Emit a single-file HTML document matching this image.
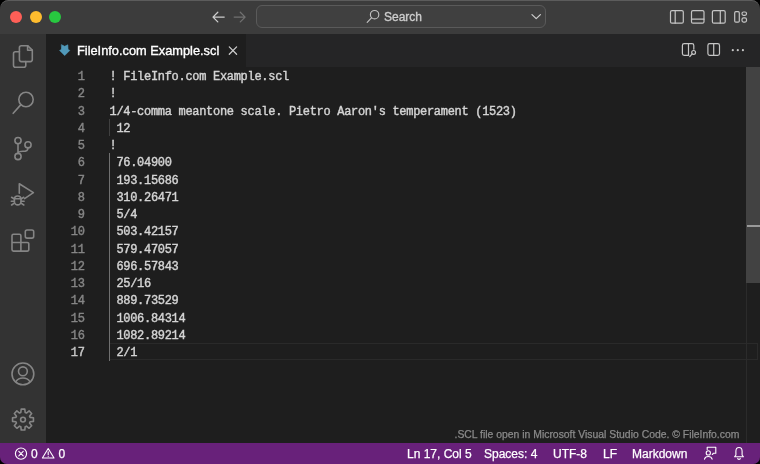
<!DOCTYPE html>
<html><head><meta charset="utf-8">
<style>
*{margin:0;padding:0;box-sizing:border-box}
html,body{width:760px;height:464px;overflow:hidden;background:#000}
body{font-family:"Liberation Sans",sans-serif;position:relative;-webkit-text-stroke:0.25px currentColor}
#win{will-change:transform;position:absolute;left:0;top:0;width:760px;height:464px;border-radius:8.5px 8.5px 7px 7px;overflow:hidden;background:#1e1e1e}
#rim{position:absolute;left:0;top:0;width:760px;height:464px;border-radius:8.5px 8.5px 7px 7px;border-top:1px solid #5c5c5c;pointer-events:none}
.abs{position:absolute}
#title{left:0;top:0;width:760px;height:34px;background:#3c3c3c}
.tl{position:absolute;top:11px;width:12px;height:12px;border-radius:50%}
#search{left:256px;top:5px;width:290px;height:23px;border:1px solid #5a5a5a;border-radius:6px;background:#404040}
#act{left:0;top:34px;width:46px;height:409px;background:#333333}
#tabs{left:46px;top:34px;width:714px;height:33px;background:#252526}
#tab{left:46px;top:34px;width:200px;height:33px;background:#1e1e1e}
#editor{left:46px;top:67px;width:714px;height:376px;background:#1e1e1e}
.code{position:absolute;left:0;top:69.1px;width:760px;font-family:"Liberation Mono",monospace;font-size:12px;letter-spacing:-0.3px;line-height:17.26px;color:#d4d4d4;white-space:pre;-webkit-text-stroke:0.4px currentColor}
.ln{position:absolute;left:46px;width:38.6px;text-align:right;color:#858585}
.ln.cur{color:#c6c6c6}
.tx{position:absolute;left:109.5px}
#status{left:0;top:443px;width:760px;height:21px;background:#68217a;color:#fff;font-size:12px}
.st{position:absolute;top:3.5px;line-height:14px;white-space:nowrap}
svg{position:absolute;overflow:visible}
</style></head><body>
<div id="win">
  <div id="title" class="abs">
    <div class="tl" style="left:10px;background:#fe5f57"></div>
    <div class="tl" style="left:29.5px;background:#febc2e"></div>
    <div class="tl" style="left:49px;background:#28c840"></div>
  </div>
  <div id="search" class="abs"></div>
  <div class="abs" style="left:384px;top:10px;font-size:12px;line-height:14px;color:#cccccc;-webkit-text-stroke:0.35px #ccc">Search</div>
  <svg width="760" height="464" style="left:0;top:0" fill="none" stroke-linecap="round" stroke-linejoin="round">
    <!-- back/forward -->
    <g stroke="#cccccc" stroke-width="1.3"><path d="M213 17.1H224.2M217.8 12.3L213 17.1L217.8 21.9"/></g>
    <g stroke="#707070" stroke-width="1.3"><path d="M234.2 17.1H245.1M240.3 12.3L245.1 17.1L240.3 21.9"/></g>
    <!-- search magnifier -->
    <g stroke="#c0c0c0" stroke-width="1.15"><circle cx="374.6" cy="14.7" r="4.2"/><path d="M371.7 17.7L367.2 22.4"/></g>
    <!-- chevron -->
    <g stroke="#cccccc" stroke-width="1.3"><path d="M532 14.6L536.2 18.6L540.4 14.6"/></g>
    <!-- layout icons -->
    <g stroke="#c5c5c5" stroke-width="1.2">
      <rect x="670.5" y="10.6" width="12.8" height="12.6" rx="1.5"/><path d="M675.2 10.6V23.2"/>
      <rect x="691.5" y="10.6" width="12.5" height="12.6" rx="1.5"/><path d="M691.5 19.2H704"/>
      <rect x="712.4" y="10.6" width="12.8" height="12.6" rx="1.5"/><path d="M720.3 10.6V23.2"/>
      <rect x="734.7" y="11.7" width="4.6" height="10.4" rx="1.2"/><rect x="742" y="12" width="4.5" height="3.3" rx="1.5"/><rect x="742" y="17.9" width="4.5" height="4.2" rx="1.5"/>
    </g>
  </svg>
  <div id="act" class="abs"></div>
  <div id="tabs" class="abs"></div>
  <div id="tab" class="abs"></div>
  <div id="editor" class="abs"></div>

  <!-- current line box -->
  <div class="abs" style="left:110px;top:343.4px;width:648px;height:16.6px;border:1px solid #2a2a2a;border-left:none"></div>
  <!-- indent guides -->
  <div class="abs" style="left:109px;top:118.9px;width:1px;height:17px;background:#404040"></div>
  <div class="abs" style="left:109px;top:153.2px;width:1px;height:207.6px;background:#707070"></div>
  <div class="code">
<div class="ln" style="top:0.00px">1</div><div class="tx" style="top:0.00px">! FileInfo.com Example.scl</div>
<div class="ln" style="top:17.26px">2</div><div class="tx" style="top:17.26px">!</div>
<div class="ln" style="top:34.52px">3</div><div class="tx" style="top:34.52px">1/4-comma meantone scale. Pietro Aaron&#x27;s temperament (1523)</div>
<div class="ln" style="top:51.78px">4</div><div class="tx" style="top:51.78px"> 12</div>
<div class="ln" style="top:69.04px">5</div><div class="tx" style="top:69.04px">!</div>
<div class="ln" style="top:86.30px">6</div><div class="tx" style="top:86.30px"> 76.04900</div>
<div class="ln" style="top:103.56px">7</div><div class="tx" style="top:103.56px"> 193.15686</div>
<div class="ln" style="top:120.82px">8</div><div class="tx" style="top:120.82px"> 310.26471</div>
<div class="ln" style="top:138.08px">9</div><div class="tx" style="top:138.08px"> 5/4</div>
<div class="ln" style="top:155.34px">10</div><div class="tx" style="top:155.34px"> 503.42157</div>
<div class="ln" style="top:172.60px">11</div><div class="tx" style="top:172.60px"> 579.47057</div>
<div class="ln" style="top:189.86px">12</div><div class="tx" style="top:189.86px"> 696.57843</div>
<div class="ln" style="top:207.12px">13</div><div class="tx" style="top:207.12px"> 25/16</div>
<div class="ln" style="top:224.38px">14</div><div class="tx" style="top:224.38px"> 889.73529</div>
<div class="ln" style="top:241.64px">15</div><div class="tx" style="top:241.64px"> 1006.84314</div>
<div class="ln" style="top:258.90px">16</div><div class="tx" style="top:258.90px"> 1082.89214</div>
<div class="ln cur" style="top:276.16px">17</div><div class="tx" style="top:276.16px"> 2/1</div>
</div>

  <!-- scrollbar -->
  <div class="abs" style="left:746px;top:67px;width:14px;height:216px;background:#424242"></div>
  <div class="abs" style="left:746px;top:283px;width:1px;height:160px;background:#2b2b2b"></div>
  <div class="abs" style="left:747px;top:225px;width:13px;height:2px;background:#9a9a9a"></div>
  <!-- tab -->
  <svg width="760" height="464" style="left:0;top:0" fill="none" stroke-linecap="round" stroke-linejoin="round">
    <path d="M61.6 44.8L64.7 46.3L67.8 44.8L68.1 49.6L69.8 50.4L64.7 55.6L59.6 50.4L61.3 49.6Z" fill="#519aba" stroke="#519aba" stroke-width="0.6"/>
    <g stroke="#cccccc" stroke-width="1.3"><path d="M229.3 46.9L236.6 54.2M236.6 46.9L229.3 54.2"/></g>
    <!-- editor actions -->
    <g stroke="#c5c5c5" stroke-width="1.2">
      <path d="M693.8 49.2V45.5A1.8 1.8 0 0 0 692 43.7H684.2A1.8 1.8 0 0 0 682.4 45.5V53.5A1.8 1.8 0 0 0 684.2 55.3H688.6M688.5 43.7V55.3"/>
      <circle cx="693.6" cy="52.4" r="1.9"/><path d="M692.2 53.9L689.8 56.5"/>
      <rect x="707.9" y="43.7" width="11.6" height="11.6" rx="1.8"/><path d="M713.7 43.7V55.3"/>
    </g>
    <g fill="#c5c5c5"><circle cx="732.8" cy="50.2" r="1.1"/><circle cx="737.8" cy="50.2" r="1.1"/><circle cx="742.9" cy="50.2" r="1.1"/></g>
    <!-- activity bar icons -->
    <g stroke="#858585" stroke-width="1.6">
      <path d="M19.4 50V47.7A2 2 0 0 1 21.4 45.7H27.6L32.3 50.2V59.6A2 2 0 0 1 30.3 61.6H21.4A2 2 0 0 1 19.4 59.6V50"/>
      <path d="M27.6 45.7V50.2H32.3"/>
      <path d="M19.4 51.7H15.5A2 2 0 0 0 13.5 53.7V65.2A2 2 0 0 0 15.5 67.2H23.8A2 2 0 0 0 25.8 65.2V61.6"/>
      <circle cx="26" cy="99.5" r="7.2"/><path d="M20.9 104.6L13.2 113.3"/>
      <circle cx="18" cy="140.6" r="3.1"/><circle cx="18" cy="156.5" r="3.1"/><circle cx="28" cy="144.8" r="3.1"/>
      <path d="M18 143.7V153.4M28 147.9C28 150.6 26.2 151.3 23 151.3C20.2 151.3 18.3 152 18 153.4"/>
      <path d="M19.3 193.3V183.7L33.4 192.6L24.6 198.6"/>
      <path d="M14.4 199.3A3.3 3.3 0 0 1 21 199.3V201.4A3.3 3.5 0 0 1 14.4 201.4Z"/>
      <path d="M14.4 198.8H21M11.6 197.3L14 198.8M23.8 197.3L21.4 198.8M11.3 201.2H14.2M21.2 201.2H24.1M11.6 205L14 203.4M23.8 205L21.4 203.4"/>
      <path d="M12 242.5V235.7A1.5 1.5 0 0 1 13.5 234.2H19.4A1.5 1.5 0 0 1 20.9 235.7V251.1M12 242.5H27.3A1.5 1.5 0 0 1 28.8 244V249.6A1.5 1.5 0 0 1 27.3 251.1H13.5A1.5 1.5 0 0 1 12 249.6Z"/>
      <rect x="25.3" y="230" width="8.4" height="8.1" rx="1.8"/>
      <circle cx="22.9" cy="373.9" r="10.9"/><circle cx="22.9" cy="371.3" r="4.4"/><path d="M15.9 381.6A8 7 0 0 1 29.9 381.6"/>
    </g>
    <g stroke="#858585" stroke-width="1.6"><path d="M20.81 412.53L21.21 409.15L24.79 409.15L25.19 412.53L26.45 413.05L29.12 410.94L31.66 413.48L29.55 416.15L30.07 417.41L33.45 417.81L33.45 421.39L30.07 421.79L29.55 423.05L31.66 425.72L29.12 428.26L26.45 426.15L25.19 426.67L24.79 430.05L21.21 430.05L20.81 426.67L19.55 426.15L16.88 428.26L14.34 425.72L16.45 423.05L15.93 421.79L12.55 421.39L12.55 417.81L15.93 417.41L16.45 416.15L14.34 413.48L16.88 410.94L19.55 413.05Z"/><circle cx="23" cy="419.6" r="2.4"/></g>
  </svg>
  <div class="abs" style="left:77px;top:43.5px;font-size:12.8px;line-height:14px;color:#ffffff;white-space:nowrap;-webkit-text-stroke:0.35px #fff">FileInfo.com Example.scl</div>
  <div class="abs" style="left:454.5px;top:429.3px;font-size:10.4px;line-height:12px;color:#8a8a8a;white-space:nowrap">.SCL file open in Microsoft Visual Studio Code. © FileInfo.com</div>
  <div id="status" class="abs">
    <div class="st" style="left:31px">0</div>
    <div class="st" style="left:58.5px">0</div>
    <div class="st" style="left:407px">Ln 17, Col 5</div>
    <div class="st" style="left:484px">Spaces: 4</div>
    <div class="st" style="left:553px">UTF-8</div>
    <div class="st" style="left:603px">LF</div>
    <div class="st" style="left:632px">Markdown</div>
  </div>
  <svg width="760" height="464" style="left:0;top:0" fill="none" stroke-linecap="round" stroke-linejoin="round">
    <!-- status bar icons -->
    <g stroke="#ffffff" stroke-width="1.1">
      <circle cx="21" cy="453.6" r="5.6"/><path d="M18.8 451.4L23.2 455.8M23.2 451.4L18.8 455.8"/>
      <path d="M48.2 448.5L54 458H42.4Z"/><path d="M48.2 451.8V454.8M48.2 456.5V456.6"/>
      <path d="M707.2 449.6V447.3H715.8V453.2H713.6L712.3 454.5"/>
      <circle cx="708.3" cy="452.9" r="2.1"/><path d="M704.5 459.2C705.3 455.6 711.3 455.6 712.1 459.2"/>
      <path d="M734.6 456.8L735.9 455V451.2A3.1 3.7 0 0 1 742.1 451.2V455L743.4 456.8Z"/><path d="M737.7 458.3A1.3 1.1 0 0 0 740.3 458.3"/>
    </g>
  </svg>
<div id="rim"></div>
</div>
</body></html>
